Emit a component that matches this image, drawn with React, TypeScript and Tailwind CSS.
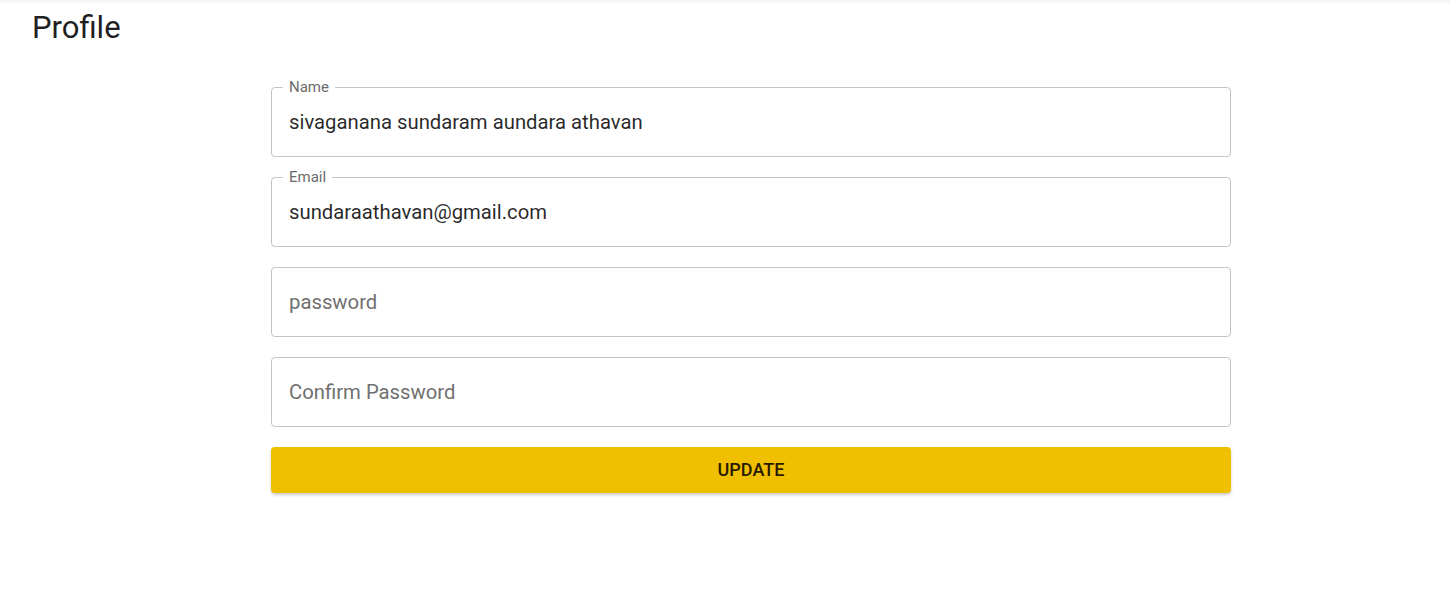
import React from "react";

const font = { fontFamily: "Roboto, 'Liberation Sans', sans-serif" };

function Field({ label, value, placeholder }: { label?: string; value?: string; placeholder?: string }) {
  return (
    <div className="relative h-[70px] w-full">
      <fieldset className="absolute inset-x-0 bottom-0 -top-[5px] m-0 rounded-[4px] border border-[#c4c4c4] px-[11px] pointer-events-none">
        {label ? (
          <legend className="h-[10px] px-[6px] text-[15px] leading-[10px] text-[#6b6b6b] whitespace-nowrap">
            <span className="relative">{label}</span>
          </legend>
        ) : (
          <legend className="block h-[10px] w-0 p-0" />
        )}
      </fieldset>
      <input
        readOnly
        value={value ?? ""}
        placeholder={placeholder}
        className="relative h-full w-full bg-transparent pl-[18px] pr-4 text-[20.3px] text-[rgba(0,0,0,0.85)] outline-none placeholder:text-[#707070]"
        style={font}
      />
    </div>
  );
}

export default function App() {
  return (
    <div className="min-h-[607px] w-full bg-white" style={font}>
      <div className="h-[4px] w-full bg-gradient-to-b from-[#f1f1f1] to-white" />
      <h1 className="pl-[32px] pt-[6px] text-[31px] leading-[36px] font-normal text-[#1f1f1f]">Profile</h1>
      <div className="mt-[41px] flex w-[960px] flex-col gap-[20px]" style={{ marginLeft: 271 }}>
        <Field label="Name" value="sivaganana sundaram aundara athavan" />
        <Field label="Email" value="sundaraathavan@gmail.com" />
        <Field placeholder="password" />
        <Field placeholder="Confirm Password" />
        <button className="h-[46px] w-full rounded-[4px] bg-[#efbf00] pb-[1px] text-[18px] font-medium text-[#2a1a00] shadow-[0_2px_3px_rgba(0,0,0,0.2)]">
          UPDATE
        </button>
      </div>
    </div>
  );
}
